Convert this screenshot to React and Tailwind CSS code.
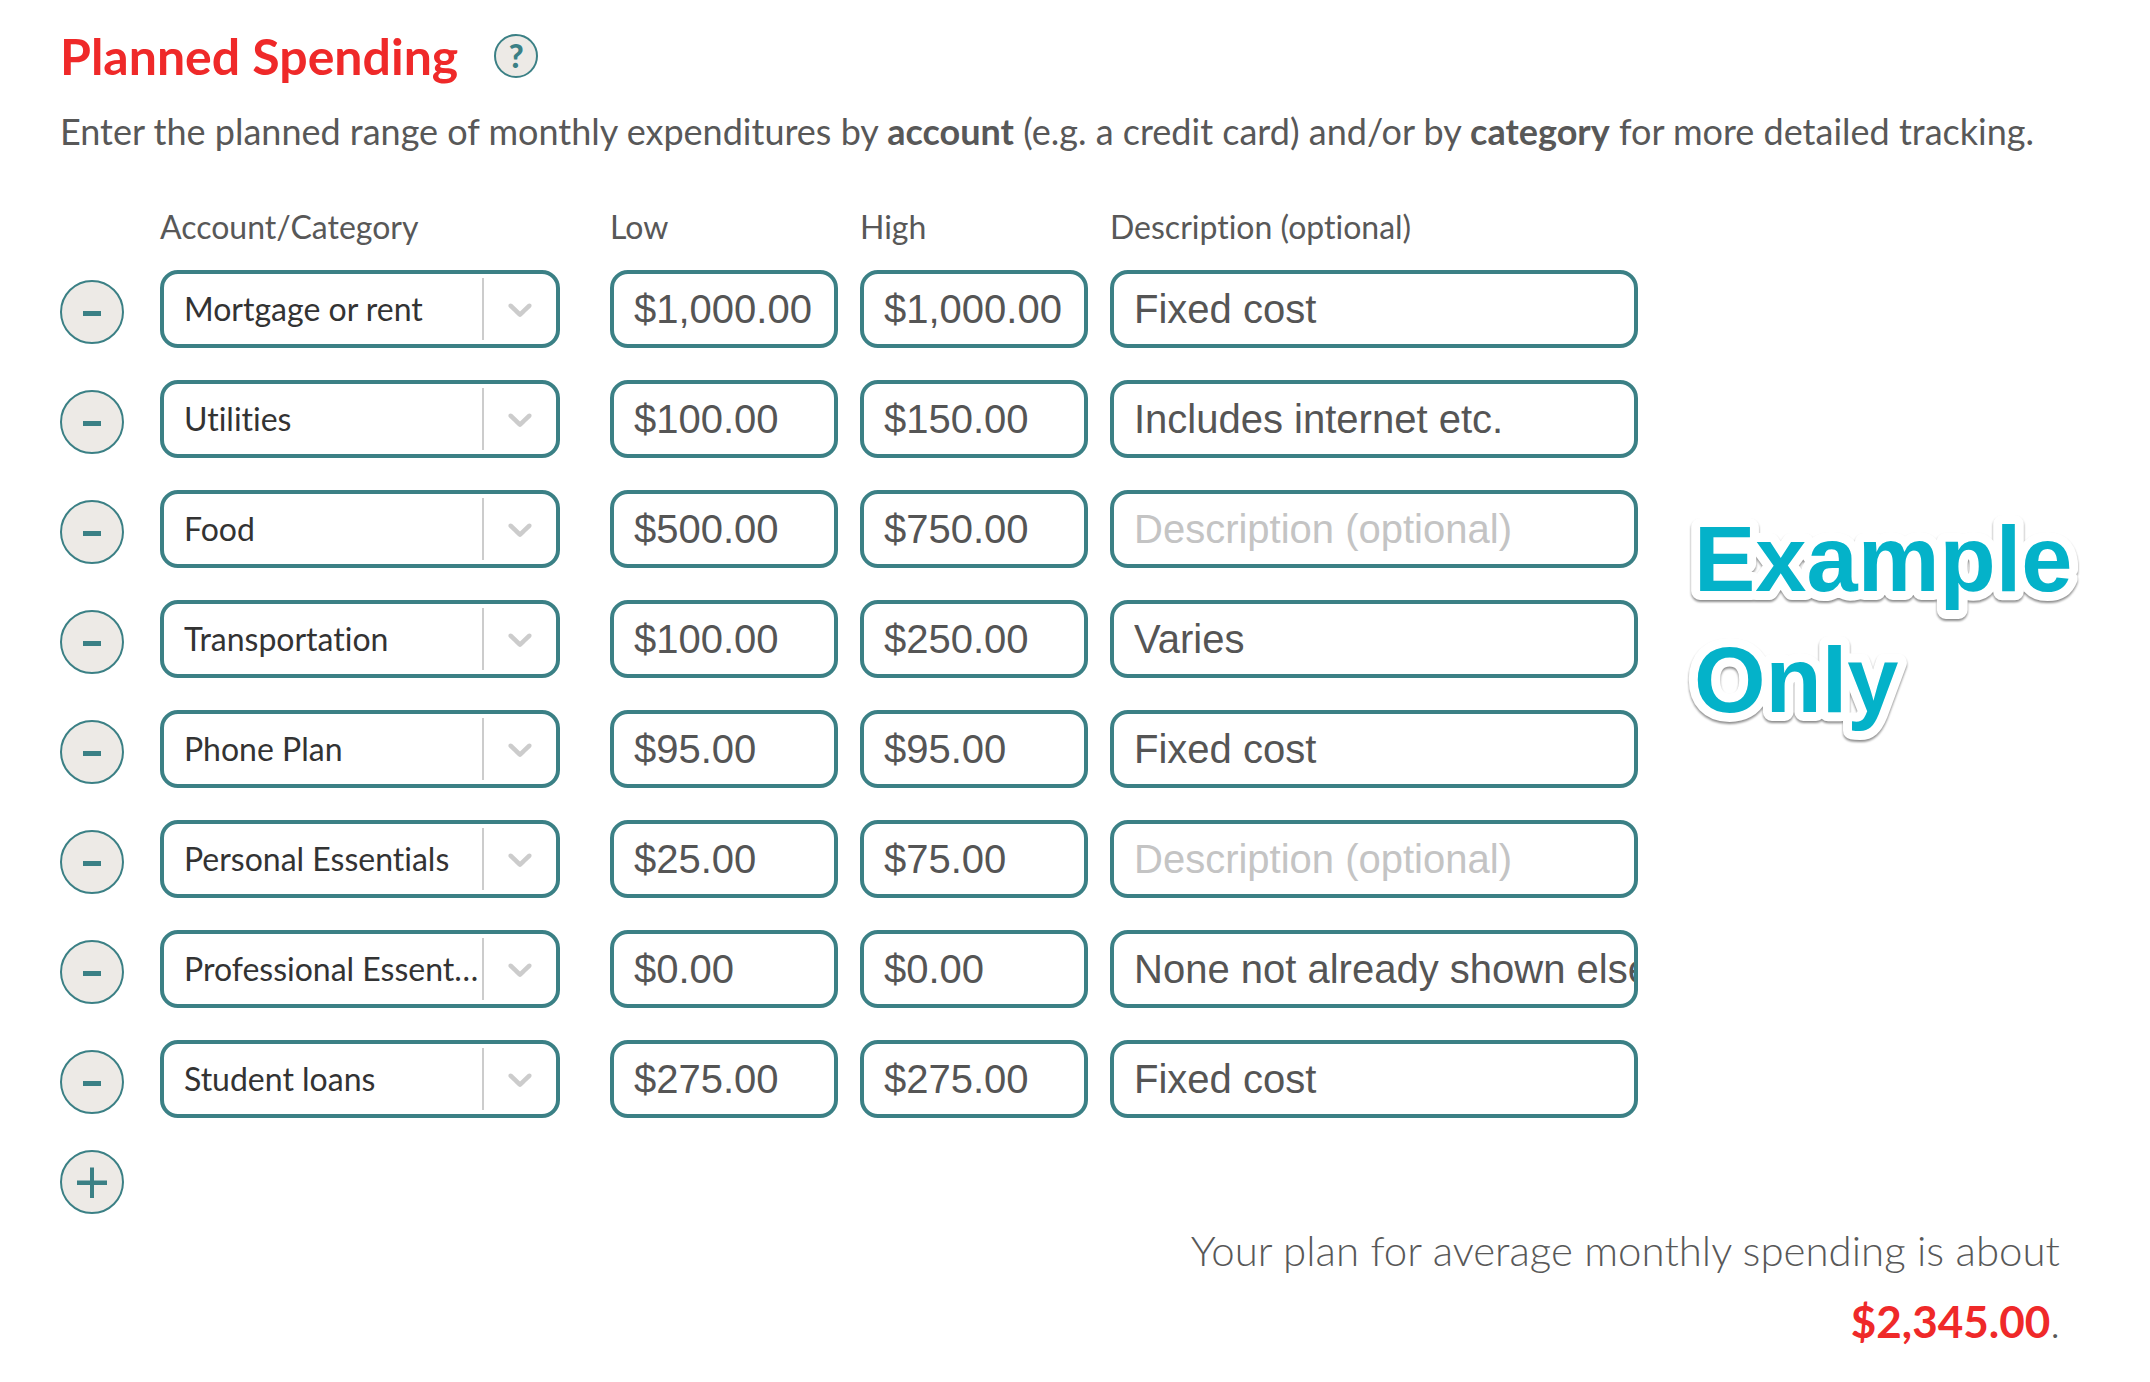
import React, { useState } from "react";

const CATEGORIES = [
  "Mortgage or rent",
  "Utilities",
  "Food",
  "Transportation",
  "Phone Plan",
  "Personal Essentials",
  "Professional Essentials",
  "Student loans",
];

const INITIAL_ROWS = [
  { id: 1, category: "Mortgage or rent", low: "$1,000.00", high: "$1,000.00", description: "Fixed cost" },
  { id: 2, category: "Utilities", low: "$100.00", high: "$150.00", description: "Includes internet etc." },
  { id: 3, category: "Food", low: "$500.00", high: "$750.00", description: "" },
  { id: 4, category: "Transportation", low: "$100.00", high: "$250.00", description: "Varies" },
  { id: 5, category: "Phone Plan", low: "$95.00", high: "$95.00", description: "Fixed cost" },
  { id: 6, category: "Personal Essentials", low: "$25.00", high: "$75.00", description: "" },
  { id: 7, category: "Professional Essentials", low: "$0.00", high: "$0.00", description: "None not already shown elsewhere" },
  { id: 8, category: "Student loans", low: "$275.00", high: "$275.00", description: "Fixed cost" },
];

const toNumber = (value) => Number(value.replace(/[^0-9.]/g, "")) || 0;

// midpoint of every low/high range
const getAverage = (rows) => {
  const total = rows.reduce((sum, r) => sum + (toNumber(r.low) + toNumber(r.high)) / 2, 0);
  return Math.ceil(total / 5) * 5;
};

const formatMoney = (value) =>
  value.toLocaleString("en-US", { style: "currency", currency: "USD" });

const RoundButton = ({ label, onClick, children }) => (
  <button
    type="button"
    aria-label={label}
    onClick={onClick}
    className="flex size-16 items-center justify-center rounded-full border-2 border-[#3b8085] bg-[#edeae6] text-[#3b8085]"
  >
    {children}
  </button>
);

const MinusIcon = () => (
  <svg className="size-9" viewBox="0 0 36 36" aria-hidden="true">
    <rect x="9" y="17" width="18" height="5" fill="currentColor" />
  </svg>
);

const PlusIcon = () => (
  <svg className="size-9" viewBox="0 0 36 36" aria-hidden="true">
    <path d="M16 3.500h4v13h13v4.500H20v13h-4V21H3v-4.500h13z" fill="currentColor" />
  </svg>
);

const CategorySelect = ({ value, onChange }) => (
  <div className="mr-7 flex h-[78px] items-center rounded-[18px] border-4 border-[#3b8085] bg-white">
    <select
      aria-labelledby="head-category"
      value={value}
      onChange={onChange}
      className="h-full min-w-0 flex-1 appearance-none truncate bg-transparent pl-5 text-[32px] text-[#333333] outline-none"
    >
      {CATEGORIES.map((c) => (
        <option key={c} value={c}>
          {c}
        </option>
      ))}
    </select>
    <span className="h-[62px] w-0.5 bg-[#cccccc]" />
    <svg className="mx-4 size-10 text-[#cccccc]" viewBox="0 0 20 20" fill="currentColor" aria-hidden="true">
      <path d="M4.516 7.548c0.436-0.446 1.043-0.481 1.576 0l3.908 3.747 3.908-3.747c0.533-0.481 1.141-0.446 1.574 0 0.436 0.445 0.408 1.197 0 1.615-0.406 0.418-4.695 4.502-4.695 4.502-0.217 0.223-0.502 0.335-0.787 0.335s-0.57-0.112-0.789-0.335c0 0-4.287-4.084-4.695-4.502s-0.436-1.17 0-1.615z" />
    </svg>
  </div>
);

const TextField = ({ labelledBy, value, placeholder, onChange }) => (
  <input
    type="text"
    aria-labelledby={labelledBy}
    value={value}
    placeholder={placeholder}
    onChange={onChange}
    className="h-[78px] w-full min-w-0 rounded-[18px] border-4 border-[#3b8085] bg-white pl-5 font-['Liberation_Sans',Arial,sans-serif] text-[40px] text-[#555555] outline-none placeholder:text-[#c4c4c4]"
  />
);

// Cut-out style lettering: thick white rim with a small shadow under it
const Sticker = () => (
  <svg
    className="h-[260px] w-[400px] font-['Liberation_Sans',Arial,sans-serif] text-[92px] font-bold drop-shadow-[0_2px_1px_rgba(0,0,0,0.45)]"
    fill="#04b2c9"
    stroke="#ffffff"
    strokeWidth="18"
    strokeLinejoin="round"
    paintOrder="stroke"
  >
    <text x="16" y="96">Example</text>
    <text x="16" y="217">Only</text>
  </svg>
);

const GRID = "grid grid-cols-[78px_428px_228px_228px_minmax(0,528px)] items-center gap-x-[22px]";

const App = () => {
  const [rows, setRows] = useState(INITIAL_ROWS);

  const updateRow = (id, key, value) =>
    setRows((prev) => prev.map((r) => (r.id === id ? { ...r, [key]: value } : r)));

  const removeRow = (id) => setRows((prev) => prev.filter((r) => r.id !== id));

  const addRow = () =>
    setRows((prev) => [
      ...prev,
      { id: Date.now(), category: CATEGORIES[0], low: "$0.00", high: "$0.00", description: "" },
    ]);

  return (
    <main className="min-h-screen bg-white px-[60px] pt-6 font-[Lato,'Noto_Sans',sans-serif] text-[#585858] [font-variant-ligatures:none]">
      {/* Heading */}
      <div className="flex h-16 items-center gap-9">
        <h1 className="text-[50px] leading-[60px] font-bold text-[#ef2929]">Planned Spending</h1>
        <button
          type="button"
          aria-label="Help"
          className="flex size-11 items-center justify-center rounded-full border-2 border-[#3b8085] bg-[#edeae6] text-[32px] leading-none font-black text-[#3b8085]"
        >
          ?
        </button>
      </div>

      <p className="mt-[19px] text-[36px] leading-12">
        Enter the planned range of monthly expenditures by <strong>account</strong> (e.g. a credit
        card) and/or by <strong>category</strong> for more detailed tracking.
      </p>

      <div className="mt-12 flex items-start">
        {/* Planned items */}
        <section>
          <div className={`${GRID} h-12 text-[32px]`}>
            <span />
            <span id="head-category">Account/Category</span>
            <span id="head-low">Low</span>
            <span id="head-high">High</span>
            <span id="head-description">Description (optional)</span>
          </div>

          <div className="mt-[19px] flex flex-col gap-8">
            {rows.map((row) => (
              <div key={row.id} className={`${GRID} h-[78px]`}>
                <div className="pt-1.5">
                  <RoundButton label={`Remove ${row.category}`} onClick={() => removeRow(row.id)}>
                    <MinusIcon />
                  </RoundButton>
                </div>
                <CategorySelect
                  value={row.category}
                  onChange={(e) => updateRow(row.id, "category", e.target.value)}
                />
                <TextField
                  labelledBy="head-low"
                  value={row.low}
                  onChange={(e) => updateRow(row.id, "low", e.target.value)}
                />
                <TextField
                  labelledBy="head-high"
                  value={row.high}
                  onChange={(e) => updateRow(row.id, "high", e.target.value)}
                />
                <TextField
                  labelledBy="head-description"
                  value={row.description}
                  placeholder="Description (optional)"
                  onChange={(e) => updateRow(row.id, "description", e.target.value)}
                />
              </div>
            ))}
          </div>

          <div className="mt-8">
            <RoundButton label="Add account or category" onClick={addRow}>
              <PlusIcon />
            </RoundButton>
          </div>
        </section>

        <aside className="mt-[292px] ml-10">
          <Sticker />
        </aside>
      </div>

      {/* Total */}
      <p className="mr-[30px] text-right text-[42px] leading-[72px] font-light">
        Your plan for average monthly spending is about
        <br />
        <strong className="text-[44px] leading-none font-bold text-[#ef2929]">
          {formatMoney(getAverage(rows))}
        </strong>
        .
      </p>
    </main>
  );
};

export default App;
